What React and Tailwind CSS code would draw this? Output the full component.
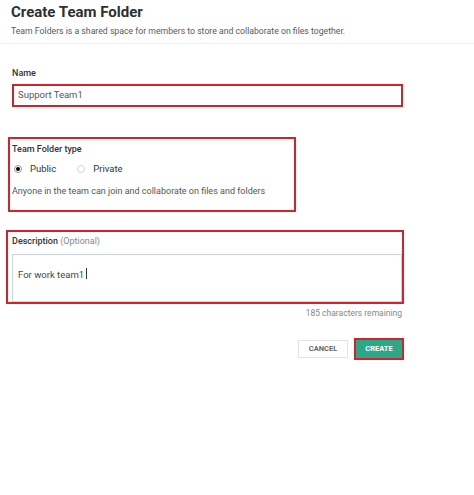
export default function App() {
  return (
    <div className="w-[474px] h-[495px] bg-white font-['Roboto',sans-serif] text-[#333]">
      <header className="px-[11px] pt-[3px] pb-[6px] border-b border-[#eeeeee]">
        <h1 className="text-[15px] leading-[18px] font-bold text-[#2f2f2f]">Create Team Folder</h1>
        <p className="mt-[4px] text-[8.7px] leading-[12px] text-[#5a5a5a]">
          Team Folders is a shared space for members to store and collaborate on files together.
        </p>
      </header>

      <div className="px-[12px] pt-[23px]">
        <label className="block text-[9px] leading-[12px] font-medium text-[#333]">Name</label>
        <div className="mt-[5px] w-[391px] h-[23px] border-2 border-[#d8202b] flex items-center px-[4px]">
          <span className="text-[9.5px] text-[#555]">Support Team1</span>
        </div>

        <div className="-ml-[4px] mt-[30px] w-[288px] h-[75px] border-2 border-[#d8202b] px-[2px] pt-[4px]">
          <div className="text-[9px] leading-[12px] font-medium text-[#333]">Team Folder type</div>
          <div className="mt-[8px] flex items-center text-[9.5px] leading-[12px] text-[#333]">
            <span className="w-[8px] h-[8px] ml-[2px] rounded-full border border-[#9a9a9a] flex items-center justify-center">
              <span className="w-[4px] h-[4px] rounded-full bg-black" />
            </span>
            <span className="ml-[8px]">Public</span>
            <span className="ml-[21px] w-[8px] h-[8px] rounded-full border border-[#d2d2d2]" />
            <span className="ml-[8px]">Private</span>
          </div>
          <div className="mt-[10px] text-[9px] leading-[12px] text-[#555]">
            Anyone in the team can join and collaborate on files and folders
          </div>
        </div>

        <div className="-ml-[6px] mt-[18px] w-[398px] h-[74px] border-2 border-[#d8202b] pl-[4px] pt-[3px]">
          <div className="text-[9px] leading-[12px] text-[#333]">
            <span className="font-medium">Description</span>{" "}
            <span className="text-[#888]">(Optional)</span>
          </div>
          <div className="mt-[7px] h-[48px] border border-[#c8d5de] px-[5px] pt-[6px]">
            <span className="text-[9.5px] leading-[12px] text-[#444]">For work team1 </span>
            <span className="inline-block w-[1px] h-[11px] bg-[#333] align-middle" />
          </div>
        </div>

        <div className="w-[390px] mt-[3px] text-right text-[8.5px] leading-[12px] text-[#888]">
          185 characters remaining
        </div>

        <div className="w-[392px] mt-[19px] flex items-center justify-end">
          <button className="w-[50px] h-[18px] border border-[#e3e3e3] bg-white text-[7.5px] font-bold text-[#666]">
            CANCEL
          </button>
          <button className="ml-[6px] w-[50px] h-[22px] border-2 border-[#d8202b] bg-[#2aa98a] text-[7.5px] font-bold text-white">
            CREATE
          </button>
        </div>
      </div>
    </div>
  );
}
